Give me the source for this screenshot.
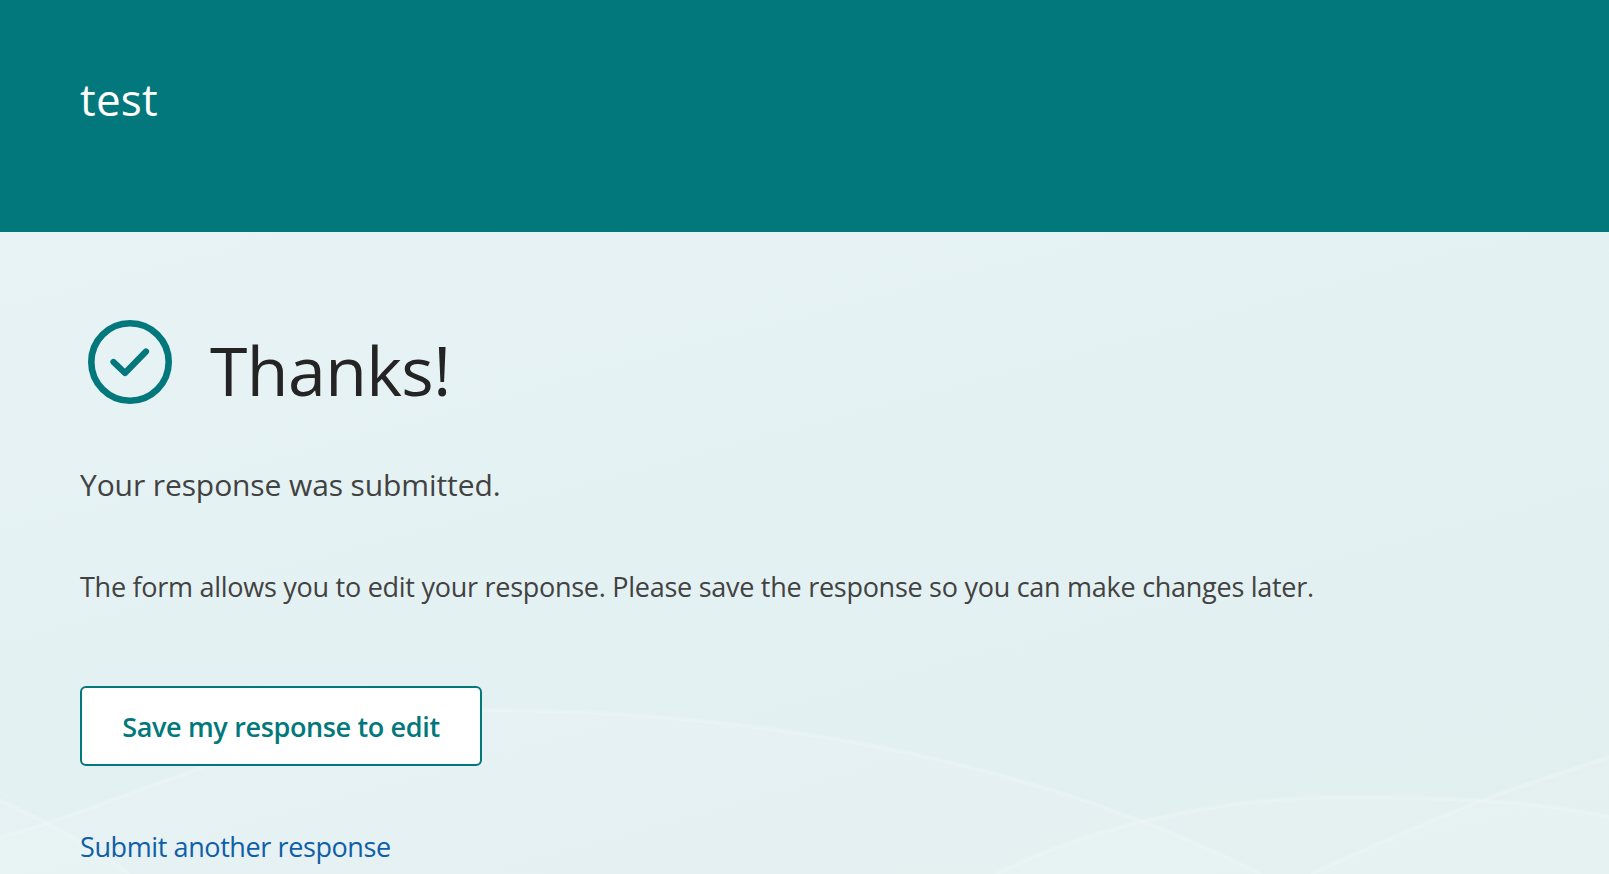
<div class="page">
  <header class="banner"><h1 class="title">test</h1></header>
  <main class="body">
    <svg class="waves" viewBox="0 0 1609 642" preserveAspectRatio="none" aria-hidden="true">
      <g fill="#ffffff" fill-opacity="0.09" stroke="none">
        <path d="M0 605 C 120 575 300 478 480 478 C 700 478 1000 510 1261 642 L 0 642 Z" />
        <path d="M996 642 C 1080 600 1200 568 1328 565 C 1400 565 1520 565 1609 585 L 1609 642 Z" />
        <path d="M1311 642 C 1380 610 1440 585 1488 566 C 1530 550 1570 538 1609 525 L 1609 642 Z" />
        <path d="M0 568 C 45 590 90 612 130 642 L 0 642 Z" />
      </g>
      <g fill="none" stroke="#ffffff" stroke-opacity="0.16" stroke-width="4">
        <path d="M0 605 C 120 575 300 478 480 478 C 700 478 1000 510 1261 642" />
        <path d="M996 642 C 1080 600 1200 568 1328 565 C 1400 565 1520 565 1609 585" />
        <path d="M1311 642 C 1380 610 1440 585 1488 566 C 1530 550 1570 538 1609 525" />
        <path d="M0 568 C 45 590 90 612 130 642" />
      </g>
    </svg>
    <div class="heading">
      <svg class="check" viewBox="0 0 84 84" aria-hidden="true">
        <circle cx="42" cy="42" r="38.7" fill="none" stroke="#03787c" stroke-width="6.6" />
        <path d="M25.5 42 L37 53 L58 31.5" fill="none" stroke="#03787c" stroke-width="6.2" stroke-linecap="round" stroke-linejoin="round" />
      </svg>
      <h2 class="thanks">Thanks!</h2>
    </div>
    <p class="lead">Your response was submitted.</p>
    <p class="note">The form allows you to edit your response. Please save the response so you can make changes later.</p>
    <button class="save" type="button">Save my response to edit</button>
    <a class="another" href="#another">Submit another response</a>
  </main>
</div>

<style>
  :global(body) {
    margin: 0;
    overflow: hidden;
  }
  .page {
    height: 874px;
    display: flex;
    flex-direction: column;
    font-family: "Open Sans", "Noto Sans", sans-serif;
    overflow: hidden;
  }
  .banner {
    height: 232px;
    flex: none;
    box-sizing: border-box;
    padding: 69px 80px 0;
    background: #03787c;
  }
  .title {
    margin: 0;
    font-size: 44px;
    font-weight: 400;
    line-height: 60px;
    color: #fff;
    letter-spacing: 0.2px;
  }
  .body {
    position: relative;
    flex: 1;
    display: flex;
    flex-direction: column;
    align-items: flex-start;
    padding: 88px 80px 0;
    background: linear-gradient(165deg, #e7f3f4 0%, #e4f1f2 50%, #e2efef 100%);
  }
  .waves {
    position: absolute;
    inset: 0;
    width: 100%;
    height: 100%;
  }
  .heading {
    position: relative;
    display: flex;
    align-items: flex-start;
    height: 84px;
  }
  .check {
    width: 84px;
    height: 84px;
    margin-left: 8px;
    flex: none;
  }
  .thanks {
    margin: 4px 0 0 38px;
    font-size: 68px;
    line-height: 92px;
    font-weight: 400;
    color: #242424;
    letter-spacing: -0.6px;
    white-space: nowrap;
  }
  .lead {
    position: relative;
    margin: 59px 0 0;
    font-size: 30px;
    line-height: 44px;
    color: #424242;
    letter-spacing: -0.1px;
    white-space: nowrap;
  }
  .note {
    position: relative;
    margin: 61px 0 0;
    font-size: 27px;
    line-height: 38px;
    color: #424242;
    letter-spacing: -0.27px;
    white-space: nowrap;
  }
  .save {
    position: relative;
    width: 402px;
    height: 80px;
    margin-top: 80px;
    padding: 0;
    background: #fff;
    border: 2px solid #03787c;
    border-radius: 6px;
    font: 600 27px "Open Sans", "Noto Sans", sans-serif;
    color: #03787c;
    letter-spacing: -0.35px;
  }
  .another {
    position: relative;
    margin-top: 61px;
    font-size: 27px;
    line-height: 40px;
    color: #0f5ea8;
    text-decoration: none;
    letter-spacing: -0.4px;
    white-space: nowrap;
  }
</style>
